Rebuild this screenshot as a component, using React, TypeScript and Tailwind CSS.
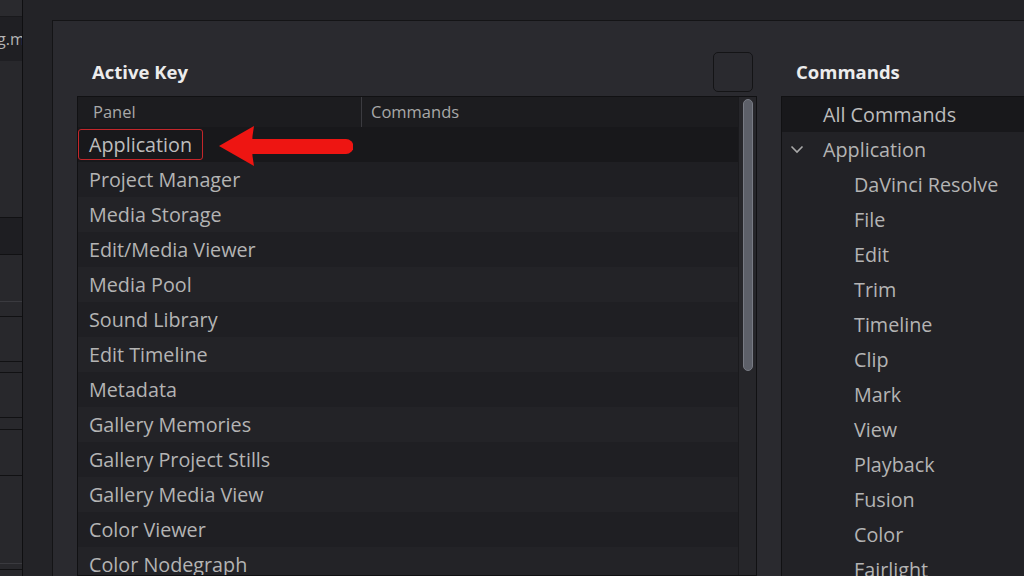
import React from 'react';

const panels = [
  'Application',
  'Project Manager',
  'Media Storage',
  'Edit/Media Viewer',
  'Media Pool',
  'Sound Library',
  'Edit Timeline',
  'Metadata',
  'Gallery Memories',
  'Gallery Project Stills',
  'Gallery Media View',
  'Color Viewer',
  'Color Nodegraph',
  'Color Lightbox',
];

const commandGroups = [
  'DaVinci Resolve',
  'File',
  'Edit',
  'Trim',
  'Timeline',
  'Clip',
  'Mark',
  'View',
  'Playback',
  'Fusion',
  'Color',
  'Fairlight',
];

const SideStrip: React.FC = () => (
  <div className="flex w-[23px] shrink-0 flex-col overflow-hidden border-r border-[#0f0f11] bg-[#28282c]">
    <div className="h-[17px] shrink-0 border-b border-[#19191c] bg-[#2a2a2e]" />
    <div className="flex h-[44px] shrink-0 items-center overflow-hidden whitespace-nowrap bg-[#1f1f23] text-[16px] text-[#b4b4b4]">
      <span className="-ml-[3px]">g.mp4</span>
    </div>
    <div className="h-[157px] shrink-0 border-b border-[#111113]" />
    <div className="h-[37px] shrink-0 border-b border-[#111113] bg-[#1e1e22]" />
    <div className="h-[47px] shrink-0 border-b border-[#3a3a3f]" />
    <div className="h-[15px] shrink-0 border-b border-[#111113]" />
    <div className="h-[45px] shrink-0 border-b border-[#111113]" />
    <div className="h-[11px] shrink-0 border-b border-[#111113]" />
    <div className="h-[45px] shrink-0 border-b border-[#111113]" />
    <div className="h-[12px] shrink-0 border-b border-[#111113]" />
    <div className="h-[46px] shrink-0 border-b border-[#111113]" />
    <div className="h-[88px] shrink-0 border-b border-[#3a3a3f]" />
    <div className="h-[6px] shrink-0 border-b border-[#111113]" />
    <div className="flex-1" />
  </div>
);

const RedArrow: React.FC = () => (
  <svg
    className="pointer-events-none absolute left-[139px] top-[27px]"
    width="136"
    height="46"
    viewBox="0 0 136 46"
  >
    <path d="M2 22 L37 2 Q33 22 37 42 Z" fill="#ee1512" />
    <path d="M34 15 L129 15 A7.5 7.5 0 0 1 129 30 L34 30 Z" fill="#ee1512" />
  </svg>
);

const ActiveKeyTable: React.FC = () => (
  <div className="relative flex flex-1 overflow-hidden border border-[#111113] bg-[#222226]">
    <div className="flex w-[660px] flex-col">
      <div className="flex h-[30px] shrink-0 items-center bg-[#1c1c1f] text-[16.5px] text-[#a8a8a8]">
        <div className="w-[283px] pl-[15px]">Panel</div>
        <div className="h-full w-px bg-[#3b3b40]" />
        <div className="pl-[9px]">Commands</div>
      </div>
      {panels.map((name, i) => (
        <div
          key={name}
          className={
            i === 0
              ? 'flex h-[35px] shrink-0 items-center bg-[#18181b] pl-0 text-[19.75px] text-[#bdbdbd]'
              : i % 2 === 1
                ? 'flex h-[35px] shrink-0 items-center bg-[#1f1f23] pl-[11px] text-[19.75px] text-[#b4b4b4]'
                : 'flex h-[35px] shrink-0 items-center bg-[#232327] pl-[11px] text-[19.75px] text-[#b4b4b4]'
          }
        >
          {i === 0 ? (
            <span className="flex h-[31px] items-center rounded-[3px] border border-[#c4262a] px-[10px] leading-none">
              {name}
            </span>
          ) : (
            name
          )}
        </div>
      ))}
    </div>
    <div className="flex flex-1 justify-center border-l border-[#1a1a1d] bg-[#26262a] pt-[2px]">
      <div className="h-[272px] w-[10px] rounded-full border border-[#787b84] bg-[#5d6069]" />
    </div>
    <RedArrow />
  </div>
);

const Chevron: React.FC = () => (
  <svg width="14" height="9" viewBox="0 0 14 9" className="mr-[19px]">
    <path d="M1.5 1.5 L7 7 L12.5 1.5" fill="none" stroke="#a9a9a9" strokeWidth="1.6" />
  </svg>
);

const CommandsTree: React.FC = () => (
  <div className="flex flex-1 flex-col overflow-hidden border-l border-t border-[#111113] bg-[#222226] text-[19.75px] text-[#b4b4b4]">
    <div className="flex h-[35px] shrink-0 items-center bg-[#18181b] pl-[41px] text-[#bdbdbd]">All Commands</div>
    <div className="flex h-[35px] shrink-0 items-center pl-[8px]">
      <Chevron />
      Application
    </div>
    {commandGroups.map((name) => (
      <div key={name} className="flex h-[35px] shrink-0 items-center whitespace-nowrap pl-[72px]">
        {name}
      </div>
    ))}
  </div>
);

const App: React.FC = () => {
  return (
    <div
      className="flex h-[576px] w-[1024px] overflow-hidden bg-[#232327]"
      style={{ fontFamily: '"Open Sans", "Noto Sans", sans-serif' }}
    >
      <SideStrip />
      <div className="flex flex-1 flex-col pl-[29px] pt-[20px]">
        <div className="flex flex-1 overflow-hidden border-l border-t border-[#141416] bg-[#2a2a2f] pl-[24px]">
          <div className="flex w-[680px] shrink-0 flex-col">
            <div className="flex h-[75px] shrink-0">
              <div className="mt-[40px] h-[22px] pl-[15px] text-[18.5px] font-bold leading-[22px] text-[#ececec]">
                Active Key
              </div>
              <div className="ml-auto mr-[4px] mt-[31px] h-[40px] w-[40px] rounded-[5px] border border-[#141416] bg-[#2a2a2f]" />
            </div>
            <ActiveKeyTable />
          </div>
          <div className="ml-[24px] flex flex-1 flex-col">
            <div className="flex h-[75px] shrink-0">
              <div className="mt-[40px] h-[22px] pl-[15px] text-[18.5px] font-bold leading-[22px] text-[#ececec]">
                Commands
              </div>
            </div>
            <CommandsTree />
          </div>
        </div>
      </div>
    </div>
  );
};

export default App;
